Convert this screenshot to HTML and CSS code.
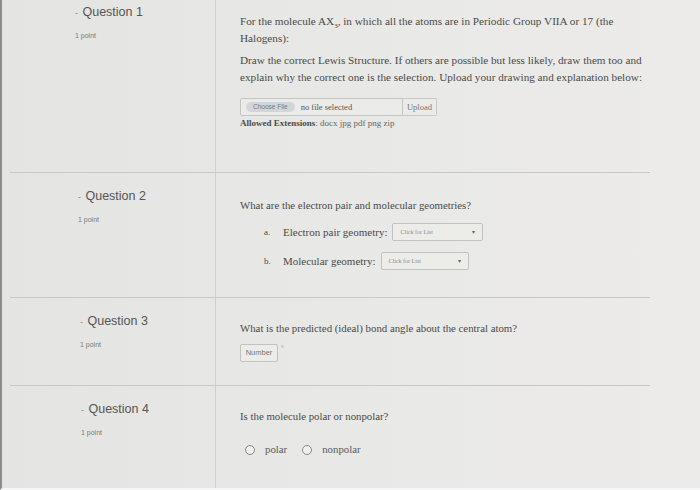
FILE: index.html
```html
<!DOCTYPE html>
<html lang="en">
<head>
    <meta charset="UTF-8">
    <meta name="viewport" content="width=device-width, initial-scale=1.0">
    <title>Lewis Structures Quiz</title>
    <link rel="stylesheet" href="styles.css">
</head>
<body>
    <div class="quiz">
        <section class="question q1">
            <div class="question-info">
                <h3><span class="toggle">-</span> Question 1</h3>
                <p class="points">1 point</p>
            </div>
            <div class="question-body">
                <p>For the molecule AX<sub>3</sub>, in which all the atoms are in Periodic Group VIIA or 17 (the<br>Halogens):</p>
                <p>Draw the correct Lewis Structure. If others are possible but less likely, draw them too and explain why the correct one is the selection. Upload your drawing and explanation below:</p>
                <div class="upload">
                    <div class="file-field">
                        <span class="file-btn">Choose File</span>
                        <span class="file-name">no file selected</span>
                    </div>
                    <span class="upload-btn">Upload</span>
                </div>
                <p class="extensions"><strong>Allowed Extensions</strong>: docx jpg pdf png zip</p>
            </div>
        </section>

        <section class="question q2">
            <div class="question-info">
                <h3><span class="toggle">-</span> Question 2</h3>
                <p class="points">1 point</p>
            </div>
            <div class="question-body">
                <p>What are the electron pair and molecular geometries?</p>
                <ol class="parts">
                    <li>
                        <span class="marker">a.</span>
                        <span class="label">Electron pair geometry:</span>
                        <span class="select">Click for List <span class="caret">&#9662;</span></span>
                    </li>
                    <li>
                        <span class="marker">b.</span>
                        <span class="label">Molecular geometry:</span>
                        <span class="select">Click for List <span class="caret">&#9662;</span></span>
                    </li>
                </ol>
            </div>
        </section>

        <section class="question q3">
            <div class="question-info">
                <h3><span class="toggle">-</span> Question 3</h3>
                <p class="points">1 point</p>
            </div>
            <div class="question-body">
                <p>What is the predicted (ideal) bond angle about the central atom?</p>
                <div class="answer">
                    <span class="number-field">Number</span>
                    <span class="degree">&deg;</span>
                </div>
            </div>
        </section>

        <section class="question q4">
            <div class="question-info">
                <h3><span class="toggle">-</span> Question 4</h3>
                <p class="points">1 point</p>
            </div>
            <div class="question-body">
                <p>Is the molecule polar or nonpolar?</p>
                <div class="choices">
                    <span class="choice"><span class="radio"></span>polar</span>
                    <span class="choice"><span class="radio"></span>nonpolar</span>
                </div>
            </div>
        </section>
    </div>
</body>
</html>
```

FILE: styles.css
```css
* {
    margin: 0;
    padding: 0;
    box-sizing: border-box;
}

body {
    height: 490px;
    overflow: hidden;
    background: linear-gradient(to right, #e4e4e2, #e9e9e7 60%, #ecebea);
    border-left: 2px solid #8c8c8a;
    border-bottom: 2px solid #f6f6f6;
    font-family: 'Liberation Serif', 'Times New Roman', serif;
    color: #4a4a48;
}

.quiz {
    width: 640px;
    margin: -11px 0 0 8px;
}

.question {
    display: grid;
    grid-template-columns: 206px 1fr;
    border-bottom: 1px solid #c8c8c6;
}

.question:last-child {
    border-bottom: none;
}

.q1 { min-height: 184px; }
.q2 { min-height: 125px; }
.q3 { min-height: 88px; }
.q4 { min-height: 120px; }

/* left column */
.question-info {
    border-right: 1px solid #d0d0ce;
    padding: 15px 0 0 65px;
    font-family: 'Liberation Sans', Arial, sans-serif;
}

.q2 .question-info { padding-left: 68px; }
.q3 .question-info { padding-left: 70px; }
.q4 .question-info { padding-left: 71px; }

.question-info h3 {
    font-size: 12.5px;
    font-weight: normal;
    line-height: 16px;
    color: #555553;
}

.toggle {
    color: #8a8a88;
    font-size: 9px;
    margin-right: 1px;
}

.points {
    margin-top: 10px;
    font-size: 7px;
    line-height: 9px;
    color: #7a7a78;
}

/* right column */
.question-body {
    padding: 24px 0 0 24px;
    font-size: 10.8px;
    line-height: 17px;
}

.q1 .question-body {
    font-size: 11.2px;
}

.q3 .question-body,
.q4 .question-body {
    padding-top: 22px;
}

.question-body p {
    max-width: 420px;
}

.question-body p + p {
    margin-top: 5px;
}

sub {
    font-size: 7px;
    line-height: 0;
}

.upload {
    display: flex;
    width: 197px;
    height: 18px;
    margin-top: 12px;
    background: #ebebe9;
}

.file-field {
    flex: 1;
    display: flex;
    align-items: center;
    gap: 6px;
    padding-left: 5px;
    border: 1px solid #c4c4c2;
    border-radius: 2px 0 0 2px;
}

.file-btn {
    font-family: 'Liberation Sans', Arial, sans-serif;
    font-size: 6.5px;
    line-height: 10px;
    padding: 0 7px;
    border-radius: 5px;
    background: #d3d6d9;
    color: #6f7a88;
}

.file-name {
    font-size: 8.5px;
    color: #555;
}

.upload-btn {
    width: 34px;
    display: flex;
    align-items: center;
    justify-content: center;
    font-size: 8.5px;
    color: #777;
    border: 1px solid #c8c8c6;
    border-left: none;
    border-radius: 0 2px 2px 0;
}

.question-body .extensions {
    font-size: 9px;
    line-height: 12px;
    margin-top: 1px;
    color: #666;
}

.extensions strong {
    color: #4a4a48;
}

/* question 2 */
.parts {
    list-style: none;
    margin: 9px 0 0 24px;
    display: flex;
    flex-direction: column;
    gap: 11px;
}

.parts li {
    display: flex;
    align-items: center;
    height: 18px;
    font-size: 11px;
}

.marker {
    width: 19px;
    font-size: 9px;
}

.label {
    margin-right: 5px;
}

.select {
    display: flex;
    justify-content: space-between;
    align-items: center;
    width: 91px;
    height: 18px;
    padding: 0 7px;
    border: 1px solid #c2c2c0;
    border-radius: 2px;
    background: #ecece9;
    font-size: 6px;
    color: #8a8c90;
}

.parts li + li .select {
    width: 88px;
}

.caret {
    font-size: 6px;
    color: #666;
}

/* question 3 */
.answer {
    display: flex;
    align-items: flex-start;
    margin-top: 7px;
}

.number-field {
    width: 38px;
    height: 18px;
    border: 1px solid #c2c2c0;
    border-radius: 2px;
    font-family: 'Liberation Sans', Arial, sans-serif;
    font-size: 7.5px;
    line-height: 16px;
    text-align: center;
    color: #777;
    background: #ecece9;
}

.degree {
    font-size: 7px;
    line-height: 8px;
    margin-left: 3px;
    color: #999;
}

/* question 4 */
.choices {
    display: flex;
    gap: 15px;
    margin-top: 16px;
    margin-left: 5px;
}

.choice {
    display: flex;
    align-items: center;
    gap: 10px;
    font-size: 10.8px;
    color: #5a5a58;
}

.radio {
    width: 10px;
    height: 10px;
    border: 1.5px solid #8a8a88;
    border-radius: 50%;
    background: #efefed;
}
```
